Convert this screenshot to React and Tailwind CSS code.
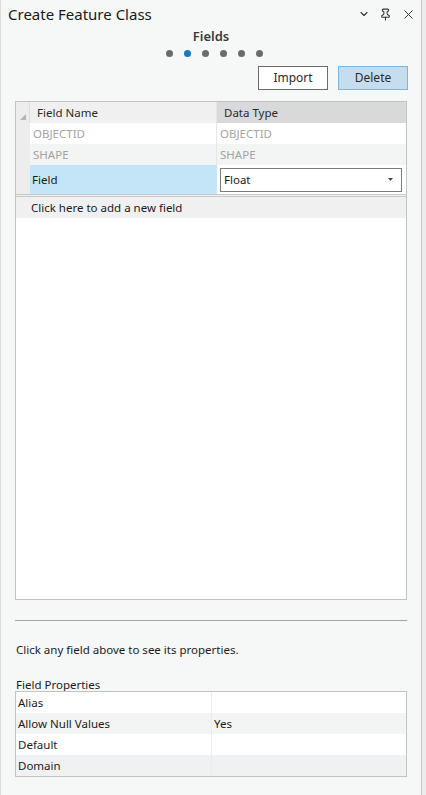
import { ChevronDown, Pin, X } from 'lucide-react';

const font = { fontFamily: '"Noto Sans", "Open Sans", sans-serif' };

const rows = [
  { name: 'OBJECTID', type: 'OBJECTID', bg: 'bg-white' },
  { name: 'SHAPE', type: 'SHAPE', bg: 'bg-[#f3f4f4]' },
];

const props = [
  { label: 'Alias', value: '', bg: 'bg-white' },
  { label: 'Allow Null Values', value: 'Yes', bg: 'bg-[#f3f4f4]' },
  { label: 'Default', value: '', bg: 'bg-white' },
  { label: 'Domain', value: '', bg: 'bg-[#f0f1f2]' },
];

export default function App() {
  return (
    <div className="flex h-[795px] w-[426px] bg-[#ececec] text-[#1b1b1b]" style={font}>
      <div className="flex flex-1 flex-col border-l border-[#dcdcdc] border-r border-r-[#c8c8c8] bg-[#f6f7f7]">
        {/* title bar */}
        <div className="flex h-[28px] items-center justify-between pl-[7px] pr-[5px]">
          <span className="text-[15px] leading-none text-[#1a1a1a]">Create Feature Class</span>
          <div className="flex items-center gap-[9px] text-[#333]">
            <ChevronDown size={12} strokeWidth={2.2} />
            <Pin size={13} strokeWidth={2} />
            <X size={15} strokeWidth={1.6} />
          </div>
        </div>

        {/* step header */}
        <div className="flex flex-col items-center">
          <span className="text-[13px] font-semibold leading-[16px] text-[#3a3a3a]">Fields</span>
          <div className="ml-[6px] mt-[6px] flex gap-[11px]">
            {[0, 1, 2, 3, 4, 5].map((i) => (
              <span key={i} className={`h-[7px] w-[7px] rounded-full ${i === 1 ? 'bg-[#0f7ac4]' : 'bg-[#6b6b6b]'}`} />
            ))}
          </div>
        </div>

        {/* buttons */}
        <div className="mt-[9px] flex justify-end gap-[10px] pr-[13px]">
          <button className="flex h-[24px] w-[70px] items-center justify-center border border-[#6b6b6b] bg-white text-[12px] text-[#2a2a2a]">Import</button>
          <button className="flex h-[24px] w-[70px] items-center justify-center border border-[#79b6e6] bg-[#c6ddf0] text-[12px] text-[#2a2a2a]">Delete</button>
        </div>

        {/* fields grid */}
        <div className="mx-[14px] mt-[11px] flex h-[499px] flex-col border border-[#c2c2c2] bg-white text-[11.5px]">
          <div className="flex h-[21px] bg-[#ededed]">
            <div className="flex w-[14px] items-end justify-center border-r border-[#dedede] pb-[3px]">
              <svg width="6" height="6" viewBox="0 0 6 6"><path d="M6 0 L6 6 L0 6 Z" fill="#b5b5b5" /></svg>
            </div>
            <div className="flex w-[187px] items-center border-r border-[#e6e6e6] bg-[#f0f0f0] pl-[7px] text-[#2b2b2b]">Field Name</div>
            <div className="flex flex-1 items-center bg-[#d8d9db] pl-[7px] text-[#2b2b2b]">Data Type</div>
          </div>
          {rows.map((r) => (
            <div key={r.name} className={`flex h-[21px] ${r.bg} text-[#a3a3a3]`}>
              <div className="w-[14px] bg-[#ededed]" />
              <div className="flex w-[187px] items-center border-r border-[#e6e6e6] pl-[3px]">{r.name}</div>
              <div className="flex flex-1 items-center pl-[3px]">{r.type}</div>
            </div>
          ))}
          <div className="flex h-[29px]">
            <div className="w-[14px] bg-[#ededed]" />
            <div className="flex w-[187px] items-center bg-[#c4e4f7] pl-[2px] text-[#1b1b1b]">Field</div>
            <div className="flex flex-1 items-center bg-white pl-[3px] pr-[4px]">
              <div className="flex h-[24px] flex-1 items-center justify-between border border-[#7a7a7a] pl-[3px] pr-[8px] text-[#1b1b1b]">
                <span>Float</span>
                <svg width="5" height="3" viewBox="0 0 5 3"><path d="M0 0 L5 0 L2.5 3 Z" fill="#444" /></svg>
              </div>
            </div>
          </div>
          <div className="h-[3px] border-y border-[#c8c8c8] bg-[#f0f0f0]" />
          <div className="flex h-[21px] items-center bg-[#f0f0f0] pl-[15px] text-[#1b1b1b]">Click here to add a new field</div>
          <div className="flex-1 bg-white" />
        </div>

        {/* separator */}
        <div className="mx-[14px] mt-[20px] h-px bg-[#a3a3a3]" />

        <div className="mt-[21px] pl-[15px] text-[11.5px] leading-[16px] text-[#1b1b1b]">Click any field above to see its properties.</div>

        <div className="mt-[21px] pl-[15px] text-[11.5px] leading-[12px] text-[#1b1b1b]">Field Properties</div>
        <div className="mx-[14px] flex flex-col border border-[#c2c2c2] text-[11.5px]">
          {props.map((p) => (
            <div key={p.label} className={`flex h-[21px] ${p.bg}`}>
              <div className="flex w-[196px] items-center border-r border-[#ececec] pl-[2px]">{p.label}</div>
              <div className="flex flex-1 items-center pl-[2px]">{p.value}</div>
            </div>
          ))}
        </div>
      </div>
      <div className="w-[4px]" />
    </div>
  );
}
